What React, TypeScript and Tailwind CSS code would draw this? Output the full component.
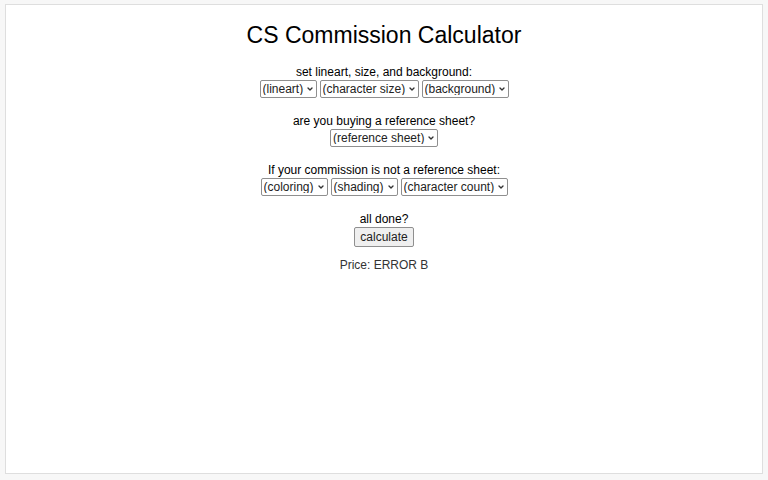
import { useState } from "react";
import { ChevronDown } from "lucide-react";

function Pick({ label, options }: { label: string; options: string[] }) {
  return (
    <span className="relative inline-flex">
      <select
        defaultValue=""
        className="h-[18px] appearance-none rounded-[2px] border border-[#8f8f8f] bg-white pr-[12px] pl-[2px] text-[12px] leading-none text-[#222]"
      >
        <option value="">{label}</option>
        {options.map((o) => (
          <option key={o} value={o}>{o}</option>
        ))}
      </select>
      <ChevronDown
        size={8}
        strokeWidth={4}
        className="pointer-events-none absolute top-[5px] right-[3px] text-[#333]"
      />
    </span>
  );
}

export default function App() {
  const [price, setPrice] = useState("ERROR B");

  return (
    <div
      className="h-[480px] w-[768px] bg-[#f7f7f7] pt-[4px] pr-[5px] pb-[6px] pl-[5px]"
      style={{ fontFamily: '"Liberation Sans", Arial, sans-serif' }}
    >
      <div className="flex h-full flex-col items-center border border-[#dedede] bg-white text-black">
        <h1 className="mt-[16px] text-[23px] leading-[28px]">CS Commission Calculator</h1>

        <p className="mt-[16px] text-[12px] leading-[14px]">set lineart, size, and background:</p>
        <div className="mt-[1px] flex gap-[3px]">
          <Pick label="(lineart)" options={["sketch", "clean"]} />
          <Pick label="(character size)" options={["headshot", "half body", "full body"]} />
          <Pick label="(background)" options={["none", "simple", "detailed"]} />
        </div>

        <p className="mt-[16px] text-[12px] leading-[14px]">are you buying a reference sheet?</p>
        <div className="mt-[1px] flex gap-[3px]">
          <Pick label="(reference sheet)" options={["yes", "no"]} />
        </div>

        <p className="mt-[16px] text-[12px] leading-[14px]">If your commission is not a reference sheet:</p>
        <div className="mt-[1px] flex gap-[3px]">
          <Pick label="(coloring)" options={["flat", "full"]} />
          <Pick label="(shading)" options={["none", "cel", "soft"]} />
          <Pick label="(character count)" options={["1", "2", "3"]} />
        </div>

        <p className="mt-[16px] text-[12px] leading-[14px]">all done?</p>
        <button
          onClick={() => setPrice("ERROR B")}
          className="mt-[1px] h-[20px] rounded-[2px] border border-[#8f8f8f] bg-[#efefef] px-[5px] text-[12px] leading-none text-[#222]"
        >
          calculate
        </button>

        <p className="mt-[11px] text-[12px] leading-[14px] text-[#333]">Price: {price}</p>
      </div>
    </div>
  );
}
